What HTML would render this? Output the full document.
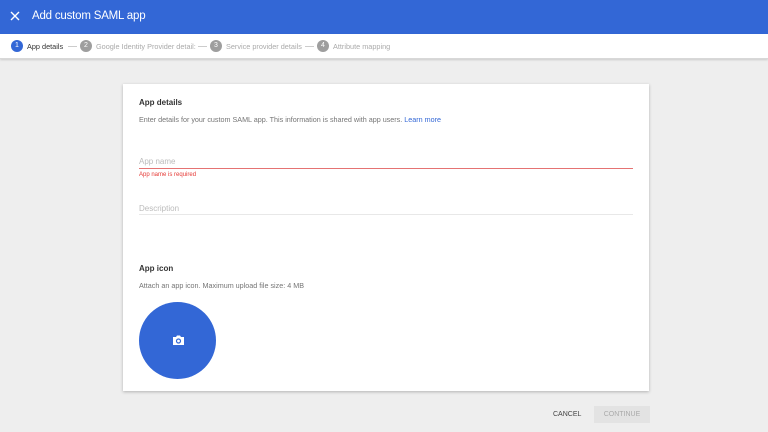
<!DOCTYPE html>
<html><head><meta charset="utf-8"><style>
*{margin:0;padding:0;box-sizing:border-box}
body{width:768px;height:432px;background:#eeeeee;font-family:"Liberation Sans",sans-serif;position:relative;overflow:hidden}
.hdr{position:absolute;left:0;top:0;width:768px;height:34px;background:#3367d6;color:#fff}
.hdr .t{position:absolute;left:32px;top:10px;font-size:11.5px;letter-spacing:-0.2px}
.hdr svg{position:absolute;left:10px;top:11px}
.steps{position:absolute;left:0;top:34px;width:768px;height:25px;background:#fff;border-bottom:1px solid #d8d8d8;box-shadow:0 1px 2px rgba(0,0,0,.15);font-size:7.3px;color:#aaa}
.st{position:absolute;top:6px;display:flex;align-items:center;white-space:nowrap}
.c{width:12px;height:12px;border-radius:50%;background:#9e9e9e;color:#fff;font-size:7px;text-align:center;line-height:12px;margin-right:4px}
.ln{position:absolute;top:12px;height:1px;width:9px;background:#ccc}
.card{position:absolute;left:123px;top:84px;width:526px;height:307px;background:#fff;box-shadow:0 1px 3px rgba(0,0,0,.25)}
.a{position:absolute;font-size:7.2px;color:#757575;white-space:nowrap}
.h{position:absolute;font-size:8px;color:#333;font-weight:bold}
</style></head><body>
<div class="hdr"><svg width="10" height="10" viewBox="0 0 10 10"><path d="M1 1L9 9M9 1L1 9" stroke="#fff" stroke-width="1.4"/></svg><div class="t">Add custom SAML app</div></div>
<div class="steps">
<div class="st" style="left:11px;color:#333"><div class="c" style="background:#3367d6">1</div>App details</div>
<div class="ln" style="left:68px"></div>
<div class="st" style="left:80px"><div class="c">2</div>Google Identity Provider detail:</div>
<div class="ln" style="left:198px"></div>
<div class="st" style="left:210px"><div class="c">3</div>Service provider details</div>
<div class="ln" style="left:305px"></div>
<div class="st" style="left:317px"><div class="c">4</div>Attribute mapping</div>
</div>
<div class="card">
<div class="h" style="left:16px;top:14px">App details</div>
<div class="a" style="left:16px;top:31px">Enter details for your custom SAML app. This information is shared with app users. <span style="color:#3367d6">Learn more</span></div>
<div class="a" style="left:16px;top:73px;color:#bbb;font-size:8px">App name</div>
<div style="position:absolute;left:16px;top:84px;width:494px;height:1px;background:#e57373"></div>
<div class="a" style="left:16px;top:88px;color:#e53935;font-size:6px">App name is required</div>
<div class="a" style="left:16px;top:120px;color:#bbb;font-size:8px">Description</div>
<div style="position:absolute;left:16px;top:130px;width:494px;height:1px;background:#e8e8e8"></div>
<div class="h" style="left:16px;top:180px">App icon</div>
<div class="a" style="left:16px;top:197px">Attach an app icon. Maximum upload file size: 4 MB</div>
<div style="position:absolute;left:16px;top:218px;width:77px;height:77px;border-radius:50%;background:#3367d6"></div>
<svg style="position:absolute;left:50px;top:251px" width="11" height="10" viewBox="0 0 11 10"><path d="M0 2h3l1-1.5h3L8 2h3v8H0z" fill="#fff"/><circle cx="5.5" cy="6" r="2" fill="none" stroke="#3367d6" stroke-width="1.2"/></svg>
</div>
<div style="position:absolute;left:553px;top:411px;font-size:7px;color:#444">CANCEL</div>
<div style="position:absolute;left:594px;top:406px;width:56px;height:17px;background:#e3e3e3;color:#aaa;font-size:7px;text-align:center;line-height:17px">CONTINUE</div>
</body></html>
